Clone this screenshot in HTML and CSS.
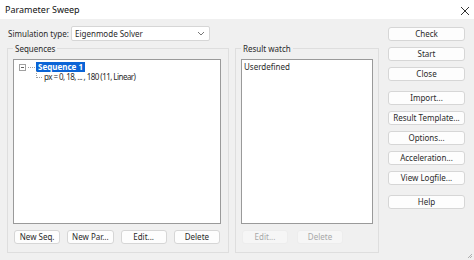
FILE: index.html
```html
<!DOCTYPE html>
<html lang="en">
<head>
<title>Parameter Sweep</title>
<meta charset="utf-8">
<link rel="stylesheet" href="styles.css">
</head>
<body>

<div class="window">
	<div class="titlebar">
		<span class="title">Parameter Sweep</span>
		<svg class="close-x" width="10" height="10" viewBox="0 0 10 10"><path d="M1 1 L9 9 M9 1 L1 9" stroke="#333" stroke-width="1" fill="none"/></svg>
	</div>

	<div class="content">
		<div class="left">
			<div class="simrow">
				<span class="simlabel">Simulation type:</span>
				<div class="select">
					<span>Eigenmode Solver</span>
					<svg width="8" height="5" viewBox="0 0 8 5"><path d="M1 1 L4 4 L7 1" stroke="#777" stroke-width="1" fill="none"/></svg>
				</div>
			</div>

			<div class="groups">
				<fieldset class="group seq">
					<legend>Sequences</legend>
					<div class="list">
						<div class="node root">
							<span class="toggle"></span>
							<span class="dots"></span>
							<span class="sel">Sequence 1</span>
						</div>
						<div class="node child">
							<span class="elbow"></span>
							<span>px = 0, 18, ... , 180 (11, Linear)</span>
						</div>
					</div>
					<div class="btnrow four">
						<button class="btn">New Seq.</button>
						<button class="btn">New Par...</button>
						<button class="btn">Edit...</button>
						<button class="btn">Delete</button>
					</div>
				</fieldset>

				<fieldset class="group watch">
					<legend>Result watch</legend>
					<div class="list">
						<div class="node plain">Userdefined</div>
					</div>
					<div class="btnrow two">
						<button class="btn" disabled>Edit...</button>
						<button class="btn" disabled>Delete</button>
					</div>
				</fieldset>
			</div>
		</div>

		<div class="right">
			<button class="btn">Check</button>
			<button class="btn">Start</button>
			<button class="btn">Close</button>
			<button class="btn sep">Import...</button>
			<button class="btn">Result Template...</button>
			<button class="btn">Options...</button>
			<button class="btn">Acceleration...</button>
			<button class="btn">View Logfile...</button>
			<button class="btn sep">Help</button>
		</div>
	</div>

	<svg class="grip" width="6" height="6" viewBox="0 0 6 6"><path d="M5 1 L1 5 M5 3 L3 5" stroke="#b0b0b0" stroke-width="1"/></svg>
</div>

</body>
</html>
```

FILE: styles.css
```css
html, body {
	margin: 0;
	padding: 0;
	height: 100%;
}

body {
	background: #f0f0f0;
	font-family: "Noto Sans", "Open Sans", sans-serif;
	font-size: 8px;
	color: #2a2a2a;
	-webkit-font-smoothing: antialiased;
}

.window {
	position: relative;
	height: 260px;
	overflow: hidden;
}

.titlebar {
	height: 19px;
	background: #fff;
	display: flex;
	align-items: center;
	justify-content: space-between;
	padding: 0 4px 0 5px;
	box-sizing: border-box;
}

.title {
	font-size: 9px;
	color: #111;
}

.close-x {
	margin-top: 2px;
}

.content {
	display: flex;
	padding: 7px 0 0 7px;
}

.left {
	width: 372px;
	display: flex;
	flex-direction: column;
}

.simrow {
	display: flex;
	align-items: center;
	height: 15px;
}

.simlabel {
	width: 63px;
	padding-left: 1px;
}

.select {
	width: 139px;
	height: 15px;
	box-sizing: border-box;
	background: #fff;
	border: 1px solid #d6d6d6;
	border-radius: 2px;
	display: flex;
	align-items: center;
	justify-content: space-between;
	padding: 0 4px 0 3px;
}

.groups {
	display: flex;
	gap: 6px;
	margin-top: 2px;
}

.group {
	margin: 0;
	border: 1px solid #dedede;
	padding: 0 5px 8px;
	min-width: 0;
}

.group legend {
	padding: 0 2px;
	margin-left: 0;
	line-height: 11px;
}

.seq {
	width: 222px;
	box-sizing: border-box;
}

.watch {
	width: 144px;
	box-sizing: border-box;
}

.list {
	margin-top: 5px;
	height: 165px;
	box-sizing: border-box;
	background: #fff;
	border: 1px solid #9a9a9a;
	padding-top: 2px;
}

.seq .list {
	width: 208px;
}

.watch .list {
	width: 132px;
}

.node {
	height: 10px;
	line-height: 10px;
	display: flex;
	align-items: center;
	white-space: nowrap;
}

.root {
	padding-left: 5px;
}

.toggle {
	position: relative;
	width: 5px;
	height: 5px;
	border: 1px solid #a0a0a0;
	background: #fff;
}

.toggle:after {
	content: '';
	position: absolute;
	left: 1px;
	top: 2px;
	width: 3px;
	height: 1px;
	background: #606060;
}

.dots {
	width: 7px;
	border-top: 1px dotted #a0a0a0;
	margin: 0 1px 0 2px;
}

.sel {
	background: #0a64d6;
	color: #fff;
	font-weight: bold;
	padding: 0 2px;
	line-height: 10px;
}

.child {
	padding-left: 22px;
	letter-spacing: -0.55px;
}

.elbow {
	width: 5px;
	height: 6px;
	border-left: 1px dotted #a0a0a0;
	border-bottom: 1px dotted #a0a0a0;
	margin: -6px 2px 0 0;
}

.plain {
	padding-left: 2px;
}

.btnrow {
	display: grid;
	margin-top: 6px;
	height: 14px;
}

.btnrow.four {
	grid-template-columns: repeat(4, 1fr);
	gap: 7px;
	padding: 0 0 0 1px;
	width: 206px;
}

.btnrow.two {
	grid-template-columns: 46px 46px;
	gap: 9px;
	padding-left: 1px;
}

.btn {
	font-family: inherit;
	font-size: 8px;
	color: #2a2a2a;
	background: #fdfdfd;
	border: 1px solid #d6d6d6;
	border-radius: 3px;
	padding: 0;
	height: 14px;
	line-height: 12px;
	white-space: nowrap;
}

.btn:disabled {
	background: #f6f6f6;
	border-color: #ededed;
	color: #a8a8a8;
}

.right {
	width: 77px;
	margin-left: 9px;
	padding-top: 1px;
	display: flex;
	flex-direction: column;
	gap: 6px;
}

.right .btn {
	height: 14px;
}

.right .sep {
	margin-top: 4px;
}

.grip {
	position: absolute;
	right: 1px;
	bottom: 1px;
}
```
